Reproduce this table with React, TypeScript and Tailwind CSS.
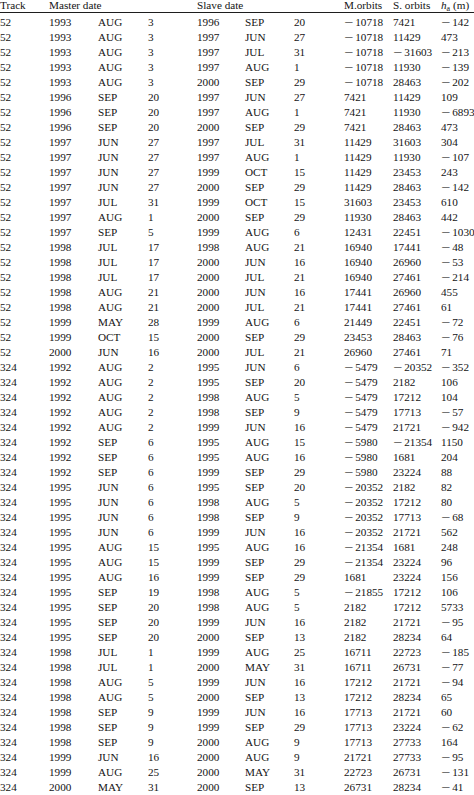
import React from "react";

const rows: string[][] = [
  ["52", "1993", "AUG", "3", "1996", "SEP", "20", "−10718", "7421", "−142"],
  ["52", "1993", "AUG", "3", "1997", "JUN", "27", "−10718", "11429", "473"],
  ["52", "1993", "AUG", "3", "1997", "JUL", "31", "−10718", "−31603", "−213"],
  ["52", "1993", "AUG", "3", "1997", "AUG", "1", "−10718", "11930", "−139"],
  ["52", "1993", "AUG", "3", "2000", "SEP", "29", "−10718", "28463", "−202"],
  ["52", "1996", "SEP", "20", "1997", "JUN", "27", "7421", "11429", "109"],
  ["52", "1996", "SEP", "20", "1997", "AUG", "1", "7421", "11930", "−6893"],
  ["52", "1996", "SEP", "20", "2000", "SEP", "29", "7421", "28463", "473"],
  ["52", "1997", "JUN", "27", "1997", "JUL", "31", "11429", "31603", "304"],
  ["52", "1997", "JUN", "27", "1997", "AUG", "1", "11429", "11930", "−107"],
  ["52", "1997", "JUN", "27", "1999", "OCT", "15", "11429", "23453", "243"],
  ["52", "1997", "JUN", "27", "2000", "SEP", "29", "11429", "28463", "−142"],
  ["52", "1997", "JUL", "31", "1999", "OCT", "15", "31603", "23453", "610"],
  ["52", "1997", "AUG", "1", "2000", "SEP", "29", "11930", "28463", "442"],
  ["52", "1997", "SEP", "5", "1999", "AUG", "6", "12431", "22451", "−1030"],
  ["52", "1998", "JUL", "17", "1998", "AUG", "21", "16940", "17441", "−48"],
  ["52", "1998", "JUL", "17", "2000", "JUN", "16", "16940", "26960", "−53"],
  ["52", "1998", "JUL", "17", "2000", "JUL", "21", "16940", "27461", "−214"],
  ["52", "1998", "AUG", "21", "2000", "JUN", "16", "17441", "26960", "455"],
  ["52", "1998", "AUG", "21", "2000", "JUL", "21", "17441", "27461", "61"],
  ["52", "1999", "MAY", "28", "1999", "AUG", "6", "21449", "22451", "−72"],
  ["52", "1999", "OCT", "15", "2000", "SEP", "29", "23453", "28463", "−76"],
  ["52", "2000", "JUN", "16", "2000", "JUL", "21", "26960", "27461", "71"],
  ["324", "1992", "AUG", "2", "1995", "JUN", "6", "−5479", "−20352", "−352"],
  ["324", "1992", "AUG", "2", "1995", "SEP", "20", "−5479", "2182", "106"],
  ["324", "1992", "AUG", "2", "1998", "AUG", "5", "−5479", "17212", "104"],
  ["324", "1992", "AUG", "2", "1998", "SEP", "9", "−5479", "17713", "−57"],
  ["324", "1992", "AUG", "2", "1999", "JUN", "16", "−5479", "21721", "−942"],
  ["324", "1992", "SEP", "6", "1995", "AUG", "15", "−5980", "−21354", "1150"],
  ["324", "1992", "SEP", "6", "1995", "AUG", "16", "−5980", "1681", "204"],
  ["324", "1992", "SEP", "6", "1999", "SEP", "29", "−5980", "23224", "88"],
  ["324", "1995", "JUN", "6", "1995", "SEP", "20", "−20352", "2182", "82"],
  ["324", "1995", "JUN", "6", "1998", "AUG", "5", "−20352", "17212", "80"],
  ["324", "1995", "JUN", "6", "1998", "SEP", "9", "−20352", "17713", "−68"],
  ["324", "1995", "JUN", "6", "1999", "JUN", "16", "−20352", "21721", "562"],
  ["324", "1995", "AUG", "15", "1995", "AUG", "16", "−21354", "1681", "248"],
  ["324", "1995", "AUG", "15", "1999", "SEP", "29", "−21354", "23224", "96"],
  ["324", "1995", "AUG", "16", "1999", "SEP", "29", "1681", "23224", "156"],
  ["324", "1995", "SEP", "19", "1998", "AUG", "5", "−21855", "17212", "106"],
  ["324", "1995", "SEP", "20", "1998", "AUG", "5", "2182", "17212", "5733"],
  ["324", "1995", "SEP", "20", "1999", "JUN", "16", "2182", "21721", "−95"],
  ["324", "1995", "SEP", "20", "2000", "SEP", "13", "2182", "28234", "64"],
  ["324", "1998", "JUL", "1", "1999", "AUG", "25", "16711", "22723", "−185"],
  ["324", "1998", "JUL", "1", "2000", "MAY", "31", "16711", "26731", "−77"],
  ["324", "1998", "AUG", "5", "1999", "JUN", "16", "17212", "21721", "−94"],
  ["324", "1998", "AUG", "5", "2000", "SEP", "13", "17212", "28234", "65"],
  ["324", "1998", "SEP", "9", "1999", "JUN", "16", "17713", "21721", "60"],
  ["324", "1998", "SEP", "9", "1999", "SEP", "29", "17713", "23224", "−62"],
  ["324", "1998", "SEP", "9", "2000", "AUG", "9", "17713", "27733", "164"],
  ["324", "1999", "JUN", "16", "2000", "AUG", "9", "21721", "27733", "−95"],
  ["324", "1999", "AUG", "25", "2000", "MAY", "31", "22723", "26731", "−131"],
  ["324", "2000", "MAY", "31", "2000", "SEP", "13", "26731", "28234", "−41"],
];

const gridCols =
  "grid grid-cols-[49px_49px_50px_49px_48px_49px_50px_49px_48px_80px]";

function Cell({ value }: { value: string }) {
  if (value.startsWith("−")) {
    return (
      <div className="whitespace-nowrap">
        <span className="inline-block w-[11.2px]">
          <span className="inline-block origin-left scale-x-[1.45]">−</span>
        </span>
        {value.slice(1)}
      </div>
    );
  }
  return <div className="whitespace-nowrap">{value}</div>;
}

export default function App() {
  return (
    <div className="w-[474px] h-[795px] overflow-hidden bg-white text-[#141414] font-['Liberation_Serif',serif] text-[11.2px]">
      <div className="w-[521px]">
        <div
          className={`${gridCols} h-[13px] leading-[11px] border-b border-[#1e1e1e] whitespace-nowrap`}
        >
          <div>Track</div>
          <div className="col-span-3">Master date</div>
          <div className="col-span-3">Slave date</div>
          <div>M.orbits</div>
          <div>S. orbits</div>
          <div>
            <span className="italic">h</span>
            <sub className="text-[8px]">a</sub> (m)
          </div>
        </div>
        <div className="pt-[2px]">
          {rows.map((r, i) => (
            <div key={i} className={`${gridCols} h-[15px] leading-[15px]`}>
              {r.map((v, j) => (
                <Cell key={j} value={v} />
              ))}
            </div>
          ))}
        </div>
      </div>
    </div>
  );
}
